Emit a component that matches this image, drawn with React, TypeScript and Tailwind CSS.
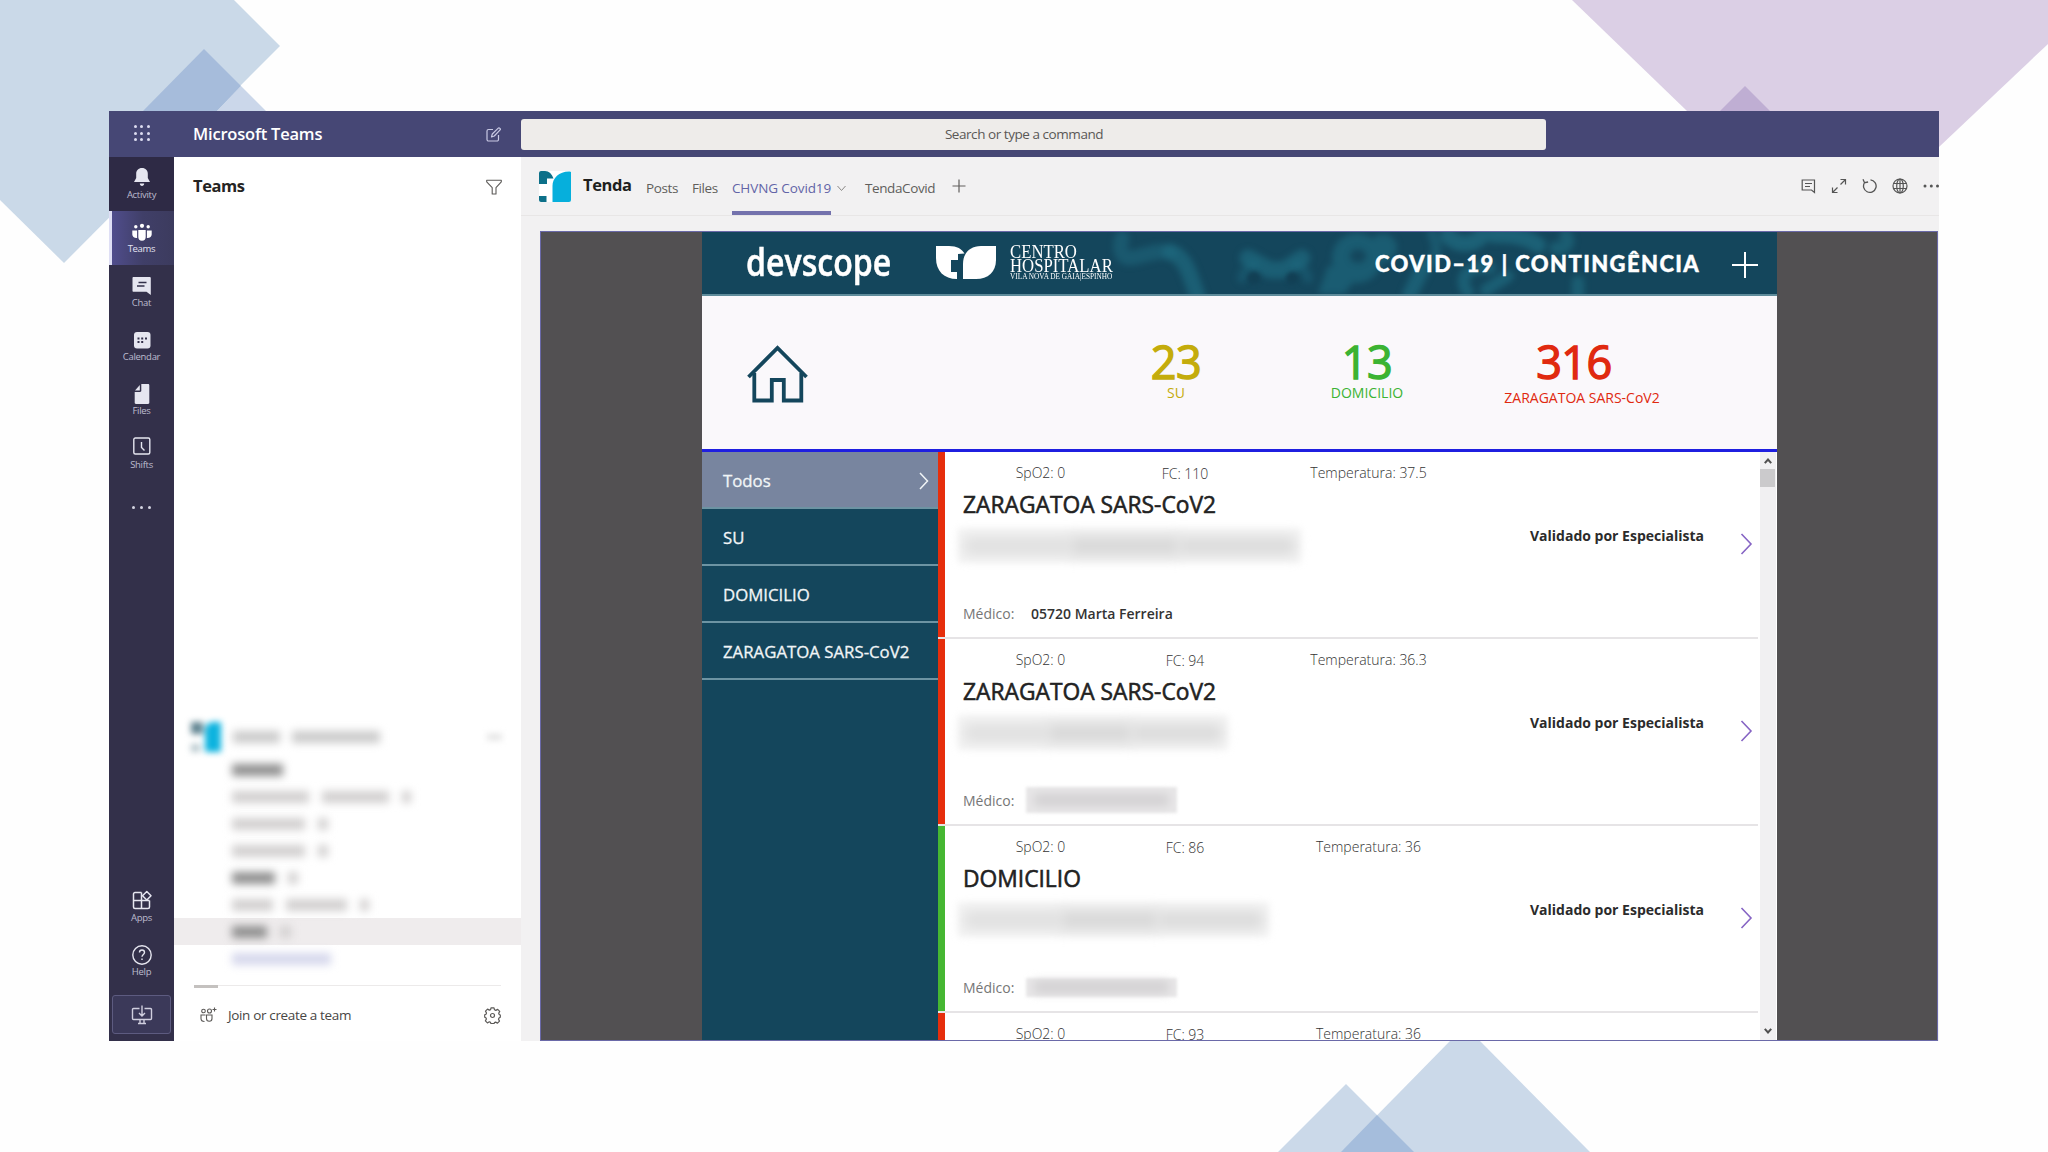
import type { ReactNode } from "react";
import clsx from "clsx";

const railTop = [
  {
    label: "Activity",
    icon: (
      <>
        <path d="M10 0c-3.600 0-5.800 2.500-5.800 5.800v4.200L2 14h16l-2.200-4V5.800C15.800 2.500 13.600 0 10 0z" />
        <path d="M7.800 15.500h4.400c0 1.500-1 2.500-2.200 2.500s-2.200-1-2.200-2.500z" />
      </>
    ),
  },
  {
    label: "Teams",
    active: true,
    icon: (
      <>
        <circle cx="10" cy="3.800" r="2.100" />
        <circle cx="3.800" cy="4.800" r="1.700" />
        <circle cx="16.200" cy="4.800" r="1.700" />
        <path d="M6.300 8h7.400v7a3.700 3.700 0 0 1-7.400 0z" />
        <path d="M.3 8.500h4.800V15c0 .4 0 .7.1 1C2.300 16.300.3 14.500.3 12.500z" />
        <path d="M19.700 8.500h-4.800V15c0 .4 0 .7-.1 1 2.900.3 4.900-1.500 4.900-3.500z" />
      </>
    ),
  },
  {
    label: "Chat",
    icon: (
      <>
        <path d="M1.500 1h16.200c.6 0 1.100.5 1.100 1.100V19l-4.300-3.200h-13c-.6 0-1-.5-1-1.100V2.100C.5 1.500.9 1 1.500 1z" />
        <path d="M6.500 6.500h8M5 10h7.500" stroke="#33304a" strokeWidth="1.300" />
      </>
    ),
  },
  {
    label: "Calendar",
    icon: (
      <>
        <rect x="2" y="2" width="16.500" height="16.500" rx="3" />
        <path d="M5.500 7.500h2v2h-2zM9.200 7.500h2v2h-2zM13 7.500h2v2h-2zM5.500 11h2v2h-2zM9.200 11h2v2h-2z" fill="#33304a" />
      </>
    ),
  },
  {
    label: "Files",
    icon: (
      <>
        <path d="M9.300 0h6.800c.7 0 1.200.5 1.200 1.200v17.600c0 .7-.5 1.200-1.200 1.200H3.900c-.7 0-1.200-.5-1.200-1.200V8h5.400c.7 0 1.200-.5 1.200-1.200z" />
        <path d="M7.800 1v5.500H3z" />
      </>
    ),
  },
  {
    label: "Shifts",
    icon: (
      <g fill="none" stroke="currentColor" strokeWidth="1.400">
        <rect x="1.800" y="0" width="16" height="16" rx="1.500" />
        <path d="M9.500 4v5.500l3 3" />
      </g>
    ),
  },
];

const railBottom = [
  {
    label: "Apps",
    icon: (
      <g fill="none" stroke="currentColor" strokeWidth="1.500">
        <path d="M9.500 1.500H3A1.500 1.500 0 0 0 1.500 3v13A1.500 1.500 0 0 0 3 17.500h13a1.500 1.500 0 0 0 1.500-1.500v-6.500M1.500 9.500h16M9.500 1.500v16" />
        <path d="M14.800.5L19 4.700 14.800 9l-4.300-4.300z" strokeLinejoin="round" />
      </g>
    ),
  },
  {
    label: "Help",
    icon: (
      <g fill="none" stroke="currentColor" strokeWidth="1.400">
        <circle cx="10" cy="10" r="9.200" />
        <path d="M7.500 7.500c0-1.500 1-2.500 2.500-2.500s2.500 1 2.500 2.400c0 2-2.500 2.200-2.500 4.400" />
        <path d="M10 13.500v1.600" />
      </g>
    ),
  },
];

const channels = [
  { widths: [50], bold: true },
  { widths: [76, 66, 8] },
  { widths: [72, 9] },
  { widths: [72, 9] },
  { widths: [42, 9], bold: true },
  { widths: [40, 60, 8] },
  { widths: [34, 10], bold: true, selected: true },
  { widths: [98], link: true },
];

const filters = ["Todos", "SU", "DOMICILIO", "ZARAGATOA SARS-CoV2"];

const stats = [
  { value: "23", label: "SU", color: "text-[#c4ac0b]", box: "w-[180px]", labelBox: "mt-0" },
  { value: "13", label: "DOMICILIO", color: "text-[#3bb332]", box: "w-[202px]", labelBox: "mt-0" },
  { value: "316", label: "ZARAGATOA SARS-CoV2", color: "text-[#e0290f]", box: "w-[212px]", labelBox: "mt-[5px] pl-[16px]" },
];

type Patient = {
  fc: string;
  temp: string;
  type: string;
  bar: string;
  nameBox: string;
  doctor?: string;
  doctorBox?: string;
};

const patients: Patient[] = [
  { fc: "110", temp: "37.5", type: "ZARAGATOA SARS-CoV2", bar: "bg-[#e62e0c]", nameBox: "w-[343px]", doctor: "05720 Marta Ferreira" },
  { fc: "94", temp: "36.3", type: "ZARAGATOA SARS-CoV2", bar: "bg-[#e62e0c]", nameBox: "w-[270px]", doctorBox: "h-[26px]" },
  { fc: "86", temp: "36", type: "DOMICILIO", bar: "bg-[#46b732]", nameBox: "w-[311px]", doctorBox: "h-[19px]" },
  { fc: "93", temp: "36", type: "ZARAGATOA SARS-CoV2", bar: "bg-[#e62e0c]", nameBox: "w-[311px]" },
];

const Backdrop = () => (
  <svg className="absolute inset-0" width="2048" height="1152" viewBox="0 0 2048 1152">
    <path d="M0 0h234l46 46L64 263 0 200z" fill="#cad9e8" />
    <path d="M241 86l25 25h-49z" fill="#cbd7ea" />
    <path d="M204 49l37 37-24 25h-74z" fill="#a6bcdb" />
    <path d="M1572 0h476v44l-109 103-252-36z" fill="#dbcfe5" />
    <path d="M1745 86l25 25h-50z" fill="#bfaed3" />
    <path d="M1450 1041h30l110 111h-249z" fill="#cbd9e9" />
    <path d="M1346 1084l68 68h-136z" fill="#cbd9e9" />
    <path d="M1377 1115l37 37h-73z" fill="#a5bddc" />
  </svg>
);

const RailItem = ({ label, icon, active }: { label: string; icon: ReactNode; active?: boolean }) => (
  <div
    className={clsx(
      "flex h-[54px] flex-col items-center pt-[11px]",
      active
        ? "border-l-[3px] border-[#dfdff5] bg-linear-to-r from-[#504d8c] via-[#403f68] to-[#3c3b5e] pr-[3px] text-white"
        : "text-[#e6e6f0]",
      label === "Activity" && "bg-[#2e2a45]"
    )}
  >
    <svg className="overflow-visible" width="20" height="20" viewBox="0 0 20 20" fill="currentColor">
      {icon}
    </svg>
    <span className={clsx("text-[9.5px] leading-[14px] tracking-[-0.3px]", active ? "text-[#e4e4f2]" : "text-[#bdbccf]")}>
      {label}
    </span>
  </div>
);

const Rail = () => (
  <nav className="flex w-[65px] flex-col bg-[#33304a]">
    {railTop.map((item) => (
      <RailItem key={item.label} {...item} />
    ))}
    <div className="mt-[25px] flex justify-center gap-[5px]">
      <i className="size-[3px] rounded-full bg-[#d5d5e2]" />
      <i className="size-[3px] rounded-full bg-[#d5d5e2]" />
      <i className="size-[3px] rounded-full bg-[#d5d5e2]" />
    </div>
    <div className="mt-auto">
      {railBottom.map((item) => (
        <RailItem key={item.label} {...item} />
      ))}
    </div>
    <div className="mx-[3px] mt-[7px] mb-[7px] flex h-[39px] items-center justify-center rounded-[3px] border border-[#5d5b80] bg-[#3b3959] text-[#d0cfdf]">
      <svg width="22" height="20" viewBox="0 0 22 20" fill="none" stroke="currentColor" strokeWidth="1.400">
        <path d="M8.500 3.500H2.500a1 1 0 0 0-1 1v9a1 1 0 0 0 1 1h17a1 1 0 0 0 1-1v-9a1 1 0 0 0-1-1h-6" />
        <path d="M11 .5v10M8 8l3 3 3-3M9 14.500v4M13 14.500v4M7 18.500h8" />
      </svg>
    </div>
  </nav>
);

const TeamsPanel = () => (
  <aside className="flex w-[347px] flex-col bg-white">
    <div className="flex h-[59px] items-center justify-between pr-[19px] pl-[19px]">
      <h2 className="text-[16.500px] font-bold tracking-[-0.4px] text-[#252423]">Teams</h2>
      <svg width="16" height="16" viewBox="0 0 16 16" fill="none" stroke="#5d5b59" strokeWidth="1.100" strokeLinejoin="round">
        <path d="M.7 1.200h14.600v1.600L10 8.600V15H6.200V8.600L.7 2.800z" />
      </svg>
    </div>
    <div className="mt-auto">
      <div className="flex h-[34px] items-center pl-[17px]">
        <div className="flex h-[30px] w-[30px] justify-between blur-[3px]">
          <div className="flex flex-col justify-between">
            <i className="h-[12px] w-[12px] bg-[#5f8390]" />
            <i className="h-[8px] w-[9px] bg-[#b5c6cc]" />
          </div>
          <i className="w-[16px] rounded-tl-lg bg-[#0cb3df]" />
        </div>
        <div className="ml-[12px] flex gap-[12px] blur-[4px]">
          <i className="h-[12px] w-[47px] bg-[#cbcbcb]" />
          <i className="h-[12px] w-[88px] bg-[#cbcbcb]" />
        </div>
        <i className="ml-[107px] h-[6px] w-[15px] bg-[#e2e2e2] blur-[3px]" />
      </div>
      <div className="pt-[2px] pb-px">
        {channels.map((row, i) => (
          <div key={i} className={clsx("flex h-[27px] items-center pl-[58px]", row.selected && "bg-[#efeced]")}>
            <div className="flex gap-[13px] blur-[4px]">
              {row.widths.map((w, j) => (
                <i
                  key={j}
                  className={clsx(
                    "h-[12px]",
                    row.bold && j === 0 ? "bg-[#8f8f8f]" : row.link ? "bg-[#d6d8ec]" : "bg-[#d2d0d0]"
                  )}
                  style={{ width: w + 1 }}
                />
              ))}
            </div>
          </div>
        ))}
      </div>
    </div>
    <div className="mx-[20px] mt-[12px] h-[4px]">
      <div className="border-t border-[#eceaea]">
        <div className="-mt-px h-[3px] w-[24px] bg-[#c4c1bf]" />
      </div>
    </div>
    <div className="flex h-[52px] items-center pr-[20px] pl-[26px]">
      <svg width="17" height="16" viewBox="0 0 17 16" fill="none" stroke="#5b5957" strokeWidth="1.100">
        <circle cx="3.500" cy="4" r="1.800" />
        <circle cx="9.500" cy="4" r="2" />
        <path d="M5.500 8H1v3.500c0 1.800 1.400 3 3.500 3M6.500 8H12v3.500a2.750 2.750 0 0 1-5.500 0z" />
        <path d="M14.500 .5v4M12.500 2.500h4" />
      </svg>
      <span className="ml-[11px] text-[13.500px] tracking-[-0.35px] text-[#484644]">Join or create a team</span>
      <svg className="ml-auto" width="17" height="17" viewBox="0 0 17 17" fill="none" stroke="#5b5957" strokeWidth="1.200" strokeLinejoin="round">
        <path d="M7 .8h3l.5 2 1.300.6 1.900-1 2 2-1 1.900.5 1.200 1.100.5v2.300l-1.300.7-.5 1.200 1 1.900-2 2-1.900-1-1.100.5-.5 1.100H7l-.5-1.300-1.200-.6-1.900 1.100-2-2 1-1.900-.5-1.200-1.200-.5V7.700l1.300-.5.5-1.200-1-1.900 2-2 1.900 1 1.200-.5z" />
        <circle cx="8.500" cy="8.500" r="2" />
      </svg>
    </div>
  </aside>
);

const TabBar = () => (
  <div className="flex h-[59px] border-b border-[#e8e6e6] pl-[18px] text-[13.500px] tracking-[-0.4px] text-[#605e5c]">
    <svg className="mt-[14px]" width="33" height="31" viewBox="0 0 33 31">
      <path d="M0 0h31v31H0z" fill="#fff" />
      <path d="M0 2a2 2 0 0 1 2-2h4c4 0 7 3 8.500 7.500H8V13H0z" fill="#0d7089" />
      <path d="M0 25h7.500v6H2a2 2 0 0 1-2-2z" fill="#0d7089" />
      <path d="M32 1v28a2 2 0 0 1-2 2H13.500V15C13.500 7 20 .5 30 .5a2 2 0 0 1 2 .5z" fill="#06afdc" />
    </svg>
    <h1 className="mt-[16px] ml-[11px] w-[48px] text-[16.500px] leading-[24px] font-bold tracking-[-0.4px] text-[#201f1e]">Tenda</h1>
    <span className="mt-[20px] ml-[15px] w-[46px] leading-[22px]">Posts</span>
    <span className="mt-[20px] w-[40px] leading-[22px]">Files</span>
    <div className="flex h-[58px] w-[99px] justify-center border-b-4 border-[#7472ad] pt-[20px] leading-[22px] tracking-[-0.1px] whitespace-nowrap text-[#6264a7]">
      CHVNG Covid19
    </div>
    <svg className="mt-[28px] ml-[6px]" width="9" height="7" viewBox="0 0 9 7" fill="none" stroke="#8a8886">
      <path d="M.5 1l4 4.500 4-4.500" />
    </svg>
    <span className="mt-[20px] ml-[19px] w-[70px] leading-[22px] whitespace-nowrap">TendaCovid</span>
    <svg className="mt-[22px] ml-[17px]" width="14" height="14" viewBox="0 0 14 14" stroke="#605e5c" strokeWidth="1.200">
      <path d="M7 .5v13M.5 7h13" />
    </svg>
    <div className="mt-[21px] ml-auto flex items-start gap-[15px] text-[#555]">
      <svg width="15" height="16" viewBox="0 0 15 16" fill="none" stroke="currentColor" strokeWidth="1.200">
        <path d="M1.200 2h12.300v12.500L10.500 12H1.200zM4 5.500h7M4 8.500h5" />
      </svg>
      <svg width="16" height="16" viewBox="0 0 16 16" fill="none" stroke="currentColor" strokeWidth="1.200">
        <path d="M9.500 1.500h5v5M14.500 1.500L9.500 6.500M1.500 9.500v5h5M1.500 14.500l5-5" />
      </svg>
      <svg width="15" height="16" viewBox="0 0 15 16" fill="none" stroke="currentColor" strokeWidth="1.300">
        <path d="M8.500 1.800a6.300 6.300 0 1 1-5.800 2.600M1 1.200l1.500 3.500 3.600-.7" />
      </svg>
      <svg width="16" height="16" viewBox="0 0 16 16" fill="none" stroke="currentColor" strokeWidth="1.200">
        <circle cx="8" cy="8" r="7" />
        <ellipse cx="8" cy="8" rx="3.300" ry="7" />
        <path d="M1.500 5.500h13M1.500 10.500h13M8 1v14" />
      </svg>
      <svg width="16" height="16" viewBox="0 0 16 16" fill="currentColor">
        <circle cx="2" cy="8" r="1.500" />
        <circle cx="8.300" cy="8" r="1.500" />
        <circle cx="14.500" cy="8" r="1.500" />
      </svg>
    </div>
  </div>
);

const AppHeader = () => (
  <header className="relative flex h-[64px] border-b-2 border-[#5f8c9b] bg-[#14465c] text-white">
    <svg className="absolute inset-0" width="1075" height="62" viewBox="0 0 1075 62" fill="none" stroke="#1f6c81" strokeLinecap="round">
      <g className="blur-[3px]">
        <path d="M420 6c-3 8-2 18 6 20 14 0 26-9 42-6" strokeWidth="15" opacity=".5" />
        <path d="M468 20c14 4 18 16 28 46" strokeWidth="16" opacity=".65" />
        <path d="M546 26l22 12h14l18-12" strokeWidth="17" strokeLinejoin="round" opacity=".65" />
        <path d="M540 46c2-6 6-12 12-14M606 46c-2-6-6-12-12-14" strokeWidth="10" opacity=".4" />
        <g fill="#1f6c81" stroke="none" opacity=".6">
          <circle cx="655" cy="26" r="25" />
          <path d="M626 34h38l-22 28h-26z" />
          <circle cx="681" cy="16" r="14" />
        </g>
        <ellipse cx="656" cy="24" rx="8" ry="7" fill="#14465c" stroke="none" />
        <path d="M722 34l-14 28" strokeWidth="15" opacity=".65" />
        <path d="M730 2c6 12 6 20-2 30" strokeWidth="10" opacity=".5" />
        <path d="M746 4c10 10 24 10 34 0M792 3c14 0 30 0 44 10" strokeWidth="16" opacity=".7" />
        <path d="M788 36c-20-4-34 10-22 24M784 58l22-14" strokeWidth="12" opacity=".65" />
        <path d="M876 50v14M864 4c6 8-4 14-10 12" strokeWidth="13" opacity=".6" />
      </g>
      <circle cx="552" cy="46" r="6" fill="#123f54" stroke="none" className="blur-[2px]" />
      <circle cx="590" cy="46" r="6" fill="#123f54" stroke="none" className="blur-[2px]" />
    </svg>
    <div className="relative ml-[44px] w-[144px] pt-[2px]">
      <span className="inline-block origin-left scale-x-[0.845] text-[38px] leading-[54px] font-semibold [-webkit-text-stroke:0.5px_#fff]">
        devscope
      </span>
    </div>
    <svg className="relative mt-[14px] ml-[46px]" width="60" height="34" viewBox="0 0 60 34" fill="#fff">
      <path d="M0 0h13c8 0 13 3 15.500 7.500L22 8v6h-7v12h6v7C8 33 0 25 0 12z" />
      <path d="M60 0v14c0 12-8 19-20 19H27V18C27 7 34 0 45 0z" />
    </svg>
    <div className="relative mt-[13px] ml-[14px] w-[103px] font-['Liberation_Serif',serif] whitespace-nowrap">
      <div className="h-[14px] w-fit origin-left scale-x-[0.930] text-[18px] leading-[15px]">CENTRO</div>
      <div className="h-[14px] w-fit origin-left scale-x-[0.930] text-[18px] leading-[15px]">HOSPITALAR</div>
      <div className="w-fit origin-left scale-x-[0.910] text-[8px] leading-[8px]">VILA NOVA DE GAIA|ESPINHO</div>
    </div>
    <div className="relative mr-[31px] ml-auto w-[326px] pt-[15px] font-['Lato',sans-serif] text-[22px] leading-[34px] font-black tracking-[1.400px] whitespace-nowrap [-webkit-text-stroke:0.4px_#fff]">
      COVID–19 | CONTINGÊNCIA
    </div>
    <svg className="relative mt-[20px] mr-[19px]" width="26" height="26" viewBox="0 0 26 26" stroke="#fff" strokeWidth="2">
      <path d="M13 0v26M0 13h26" />
    </svg>
  </header>
);

const Summary = () => (
  <section className="flex h-[156px] border-b-[3px] border-[#1f1fe0] bg-[#faf8fb]">
    <svg className="mt-[49px] ml-[45px]" width="61" height="60" viewBox="0 0 61 60" fill="none" stroke="#14465c" strokeWidth="3.800">
      <path d="M1.500 32L30.500 3l29 29" />
      <path d="M7.300 28v27.500h17.500V35h12v20.500h17.500V28" />
    </svg>
    <div className="mt-[45px] ml-auto flex pr-[97px]">
      {stats.map((s) => (
        <div key={s.label} className={clsx("flex flex-col items-center", s.box, s.color)}>
          <span className="text-[45px] leading-[42px] tracking-[-0.5px] [-webkit-text-stroke:1.400px_currentColor]">{s.value}</span>
          <span className={clsx("text-[14px] leading-[20px] whitespace-nowrap", s.labelBox)}>{s.label}</span>
        </div>
      ))}
    </div>
  </section>
);

const FilterMenu = () => (
  <div className="w-[236px] bg-[#14465c]">
    {filters.map((f, i) => (
      <div
        key={f}
        className={clsx(
          "flex h-[57px] items-center justify-between border-b-2 border-[#6d94a3] pt-[2px] pr-[9px] pl-[21px] text-[16.800px] whitespace-nowrap text-[#f1f5f7] [-webkit-text-stroke:0.3px_currentColor]",
          i === 0 && "bg-[#78859f]"
        )}
      >
        {f}
        {i === 0 && (
          <svg width="10" height="18" viewBox="0 0 10 18" fill="none" stroke="#f1f5f7" strokeWidth="1.500">
            <path d="M1 1l7.500 8L1 17" />
          </svg>
        )}
      </div>
    ))}
  </div>
);

const PatientCard = ({ fc, temp, type, bar, nameBox, doctor, doctorBox }: Patient) => (
  <div className="flex h-[187px] shrink-0 border-b-2 border-[#e6e4e6] bg-white">
    <div className={clsx("w-[7px]", bar)} />
    <div className="flex-1 pl-[18px]">
      <div className="flex h-[42px] items-center pb-[2px] text-center text-[14px] font-light text-[#333]">
        <span className="w-[155px]">SpO2: 0</span>
        <span className="w-[134px] pt-[2px]">FC: {fc}</span>
        <span className="w-[233px]">Temperatura: {temp}</span>
      </div>
      <div className="flex">
        <div className="flex-1">
          <h3 className="text-[22.800px] leading-[22px] text-[#222] [-webkit-text-stroke:0.55px_currentColor]">{type}</h3>
          <div className={clsx("mt-[12px] -ml-[5px] flex h-[35px] items-center justify-between bg-[#f3f3f3] px-[6px] blur-[3px]", nameBox)}>
            <i className="h-[18px] w-[32%] bg-[#dfdfdf] blur-[6px]" />
            <i className="h-[20px] w-[33%] bg-[#d8d8d8] blur-[6px]" />
            <i className="h-[18px] w-[35%] bg-[#dadada] blur-[6px]" />
          </div>
          <div className="mt-[40px] flex h-[20px] items-center text-[14px]">
            <span className="w-[68px] text-[#767676]">Médico:</span>
            {doctor && <span className="font-semibold text-[#333]">{doctor}</span>}
            {doctorBox && (
              <div className={clsx("-ml-[5px] flex w-[151px] items-center bg-[#e8e7e8] px-2 blur-[1.5px]", doctorBox)}>
                <i className="h-[12px] w-full bg-[#d2d0d2] blur-[5px]" />
              </div>
            )}
          </div>
        </div>
        <span className="mt-[32px] text-[14px] leading-[20px] font-bold text-[#2b2b2b]">Validado por Especialista</span>
        <svg className="mt-[39px] mr-[5px] ml-[36px]" width="13" height="22" viewBox="0 0 13 22" fill="none" stroke="#8664c4" strokeWidth="1.600">
          <path d="M1.500 1l9.500 10-9.500 10" />
        </svg>
      </div>
    </div>
  </div>
);

const Scrollbar = () => (
  <div className="flex w-[19px] flex-col items-center bg-white">
    <div className="flex h-full w-[16px] flex-col items-center bg-[#f1f0f2]">
      <svg className="mt-[6px]" width="8" height="6" viewBox="0 0 8 6" fill="none" stroke="#505050" strokeWidth="2">
        <path d="M.8 5.200L4 1.500l3.200 3.700" />
      </svg>
      <div className="mt-[5px] h-[18px] w-[15px] bg-[#cbcacc]" />
      <svg className="mt-auto mb-[6px]" width="8" height="6" viewBox="0 0 8 6" fill="none" stroke="#505050" strokeWidth="2">
        <path d="M.8.8L4 4.500 7.200.8" />
      </svg>
    </div>
  </div>
);

const App = () => {
  return (
    <div className="relative h-[1152px] w-[2048px] overflow-hidden bg-[#fefefe] pt-[111px] pl-[109px] font-['Open_Sans',sans-serif]">
      <Backdrop />
      <div className="relative flex h-[930px] w-[1830px] flex-col overflow-hidden">
        <div className="flex h-[46px] items-center bg-[#464775]">
          <div className="grid w-[65px] grid-cols-[repeat(3,3px)] justify-center gap-[3.500px] pb-[2px]">
            {Array.from({ length: 9 }, (_, i) => (
              <i key={i} className="size-[3px] rounded-full bg-[#dcdcf0]" />
            ))}
          </div>
          <span className="w-[292px] pl-[19px] text-[16.500px] font-semibold tracking-[-0.2px] text-white">Microsoft Teams</span>
          <svg className="ml-[20px]" width="15" height="15" viewBox="0 0 15 15" fill="none" stroke="#c9c9e4" strokeWidth="1.200" strokeLinejoin="round">
            <path d="M7 2.500H2.500A1.500 1.500 0 0 0 1 4v8.500A1.500 1.500 0 0 0 2.500 14H11a1.500 1.500 0 0 0 1.500-1.500V8" />
            <path d="M5.500 10l.8-3L12 1.300a1.300 1.300 0 0 1 1.900 1.900L8.300 9z" />
          </svg>
          <div className="ml-[20px] flex h-[31px] w-[1025px] items-center justify-center rounded-[3px] bg-[#eeecea] pr-[19px] text-[13.500px] tracking-[-0.45px] text-[#5a5856]">
            Search or type a command
          </div>
        </div>
        <div className="flex min-h-0 flex-1">
          <Rail />
          <TeamsPanel />
          <main className="flex flex-1 flex-col bg-[#f2f1f2]">
            <TabBar />
            <div className="mt-[15px] mr-px ml-[19px] flex min-h-0 flex-1 border border-[#6a69a8] bg-[#525052] pl-[161px]">
              <div className="flex w-[1075px] flex-col overflow-hidden">
                <AppHeader />
                <Summary />
                <div className="flex min-h-0 flex-1 bg-white">
                  <FilterMenu />
                  <div className="flex flex-1 flex-col overflow-hidden">
                    {patients.map((p, i) => (
                      <PatientCard key={i} {...p} />
                    ))}
                  </div>
                  <Scrollbar />
                </div>
              </div>
            </div>
          </main>
        </div>
      </div>
    </div>
  );
};

export default App;
